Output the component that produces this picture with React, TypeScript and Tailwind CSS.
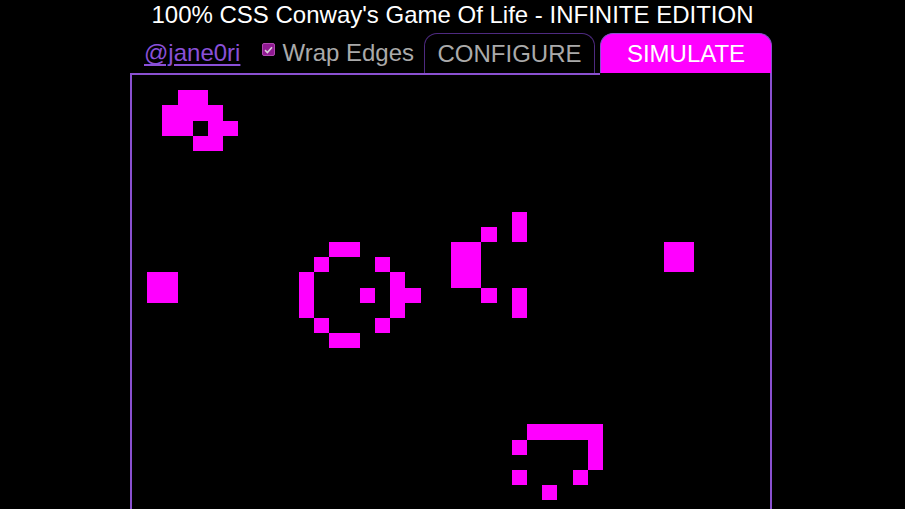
import React from "react";

const ALIVE: Record<number, number[]> = {
  1: [3, 4],
  2: [2, 3, 4, 5],
  3: [2, 3, 5, 6],
  4: [4, 5],
  9: [25],
  10: [23, 25],
  11: [13, 14, 21, 22, 35, 36],
  12: [12, 16, 21, 22, 35, 36],
  13: [1, 2, 11, 17, 21, 22],
  14: [1, 2, 11, 15, 17, 18, 23, 25],
  15: [11, 17, 25],
  16: [12, 16],
  17: [13, 14],
  23: [26, 27, 28, 29, 30],
  24: [25, 30],
  25: [30],
  26: [25, 29],
  27: [27],
};

const N = 42;

export default function App() {
  const cells: React.ReactNode[] = [];
  for (let r = 0; r < N; r++) {
    for (let c = 0; c < N; c++) {
      const alive = (ALIVE[r] || []).includes(c);
      cells.push(
        <div key={r * N + c} className={alive ? "bg-[#ff00ff]" : ""} />
      );
    }
  }

  return (
    <div
      className="h-[509px] overflow-hidden bg-black"
      style={{ fontFamily: '"Liberation Sans", Arial, sans-serif' }}
    >
      <h1 className="pt-[1px] text-center text-[24px] leading-[27px] font-normal text-white">
        100% CSS Conway's Game Of Life - INFINITE EDITION
      </h1>
      <div className="ml-[130px] mt-[5px] w-[642px]">
        <div className="flex items-end">
          <div className="flex flex-1 items-start border-b-2 border-[#8a50d0] h-[42px]">
            <a
              href="#"
              className="ml-[14px] text-[24px] leading-[40px] text-[#8a50d8] underline decoration-[1.5px] underline-offset-[3px]"
            >
              @jane0ri
            </a>
            <span className="ml-[22px] mt-[10px] flex h-[13px] w-[13px] items-center justify-center rounded-[2px] border border-[#b048b0] bg-[#901a92]">
              <svg width="9" height="8" viewBox="0 0 9 8">
                <path
                  d="M1 4.2 L3.4 6.5 L8 1.3"
                  fill="none"
                  stroke="#d8d0d8"
                  strokeWidth="1.6"
                />
              </svg>
            </span>
            <span className="ml-[7px] text-[24px] leading-[40px] text-[#aaaaaa]">
              Wrap Edges
            </span>
            <div className="ml-auto flex h-[40px] w-[171px] items-center justify-center rounded-t-[13px] border-[1.5px] border-b-0 border-[#4e2a80] text-[24px] leading-[40px] text-[#aaaaaa]">
              CONFIGURE
            </div>
            <div className="w-[5px]" />
          </div>
          <div className="flex w-[172px] flex-col">
            <div className="flex h-[40px] items-center justify-center rounded-t-[13px] border-[1.5px] border-b-0 border-[#8a50d0] bg-[#ff00ff] text-[24px] leading-[40px] text-white">
              SIMULATE
            </div>
            <div className="h-[2px] border-r-2 border-[#8a50d0]" />
          </div>
        </div>
        <div className="border-x-2 border-b-2 border-[#8a50d0]">
          <div className="grid h-[638px] grid-cols-[repeat(42,1fr)] grid-rows-[repeat(42,1fr)]">
            {cells}
          </div>
        </div>
      </div>
    </div>
  );
}
